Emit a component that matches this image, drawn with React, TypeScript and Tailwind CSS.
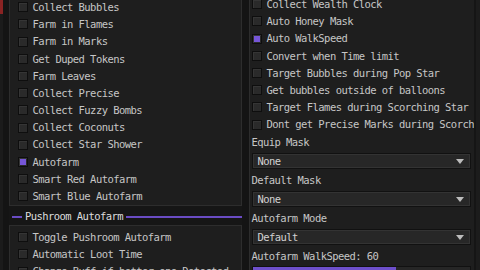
import React from "react";

const leftItems: [string, boolean][] = [
  ["Collect Bubbles", false],
  ["Farm in Flames", false],
  ["Farm in Marks", false],
  ["Get Duped Tokens", false],
  ["Farm Leaves", false],
  ["Collect Precise", false],
  ["Collect Fuzzy Bombs", false],
  ["Collect Coconuts", false],
  ["Collect Star Shower", false],
  ["Autofarm", true],
  ["Smart Red Autofarm", false],
  ["Smart Blue Autofarm", false],
];

const pushItems: [string, boolean][] = [
  ["Toggle Pushroom Autofarm", false],
  ["Automatic Loot Time", false],
  ["Change Buff if better one Detected", false],
];

const rightItems: [string, boolean][] = [
  ["Collect Wealth Clock", false],
  ["Auto Honey Mask", false],
  ["Auto WalkSpeed", true],
  ["Convert when Time limit", false],
  ["Target Bubbles during Pop Star", false],
  ["Get bubbles outside of balloons", false],
  ["Target Flames during Scorching Star", false],
  ["Dont get Precise Marks during Scorch", false],
];

function Box({ on }: { on: boolean }) {
  return (
    <span className="flex h-[10px] w-[10px] shrink-0 items-center justify-center border border-[#0e0e0e] bg-[#2a2a2a] shadow-[inset_1px_1px_0_#353535]">
      {on ? <span className="h-[6px] w-[6px] bg-[#7656d8]" /> : null}
    </span>
  );
}

function CheckRow({ label, on }: { label: string; on: boolean }) {
  return (
    <div className="flex h-[17.2px] shrink-0 items-center gap-[5px]">
      <Box on={on} />
      <span className="whitespace-nowrap">{label}</span>
    </div>
  );
}

function Label({ text }: { text: string }) {
  return (
    <div className="flex h-[17.2px] shrink-0 items-center whitespace-nowrap">
      {text}
    </div>
  );
}

function Dropdown({ value }: { value: string }) {
  return (
    <div className="mt-[2.4px] mb-[2px] mr-[3px] flex h-[16.5px] shrink-0 items-center justify-between border border-[#111] bg-[#272727] pl-[5px] pr-[6px] text-[#d2d2d2] shadow-[inset_0_0_0_1px_#333]">
      <span>{value}</span>
      <svg width="8" height="5" viewBox="0 0 8 5">
        <path d="M0 0h8L4 5z" fill="#bdbdbd" />
      </svg>
    </div>
  );
}

export default function App() {
  return (
    <div
      className="flex h-[270px] w-[480px] overflow-hidden bg-[#161616] text-[10.5px] leading-none tracking-[-0.56px] text-[#c6c6c6]"
      style={{ fontFamily: '"DejaVu Sans Mono", monospace' }}
    >
      <div className="flex w-[3px] flex-col">
        <div className="h-[14px] bg-[#8a2323]" />
        <div className="flex-1 bg-[#1b1b1b]" />
      </div>
      <div className="w-[6px] bg-[#141414]" />

      <div className="flex w-[233px] flex-col">
        <div className="flex h-[206px] flex-col overflow-hidden border border-t-0 border-[#2d2d2d] bg-[#1e1e1e] pl-[7.5px]">
          <div className="-mt-[1.4px] flex flex-col">
            {leftItems.map(([l, on]) => (
              <CheckRow key={l} label={l} on={on} />
            ))}
          </div>
        </div>
        <div className="mt-[4px] flex h-[13px] items-center gap-[3px] pl-[3px]">
          <div className="h-[2px] w-[10px] bg-[#6a4cc4]" />
          <span className="whitespace-nowrap text-[#dedede]">Pushroom Autofarm</span>
          <div className="h-[2px] flex-1 bg-[#6a4cc4]" />
        </div>
        <div className="mt-[2px] flex flex-1 flex-col overflow-hidden border border-b-0 border-[#2d2d2d] bg-[#1e1e1e] pl-[7.5px]">
          <div className="mt-[2.6px] flex flex-col">
            {pushItems.map(([l, on]) => (
              <CheckRow key={l} label={l} on={on} />
            ))}
          </div>
        </div>
      </div>

      <div className="w-[7px] bg-[#141414]" />

      <div className="flex w-[225px] flex-col overflow-hidden border-l border-[#2d2d2d] bg-[#1e1e1e] pl-[1.5px]">
        <div className="-mt-[4.3px] flex flex-col">
          {rightItems.map(([l, on]) => (
            <CheckRow key={l} label={l} on={on} />
          ))}
          <Label text="Equip Mask" />
          <Dropdown value="None" />
          <Label text="Default Mask" />
          <Dropdown value="None" />
          <Label text="Autofarm Mode" />
          <Dropdown value="Default" />
          <Label text="Autofarm WalkSpeed: 60" />
          <div className="mt-[1px] mr-[3px] flex h-[14px] border border-[#111] bg-[#262626]">
            <div className="h-full w-[143px] bg-[#6d4fcb]" />
          </div>
        </div>
      </div>

      <div className="flex flex-1 bg-[#151515]">
        <div className="ml-[2px] w-[4px] bg-[#1c1c1c]" />
      </div>
    </div>
  );
}
